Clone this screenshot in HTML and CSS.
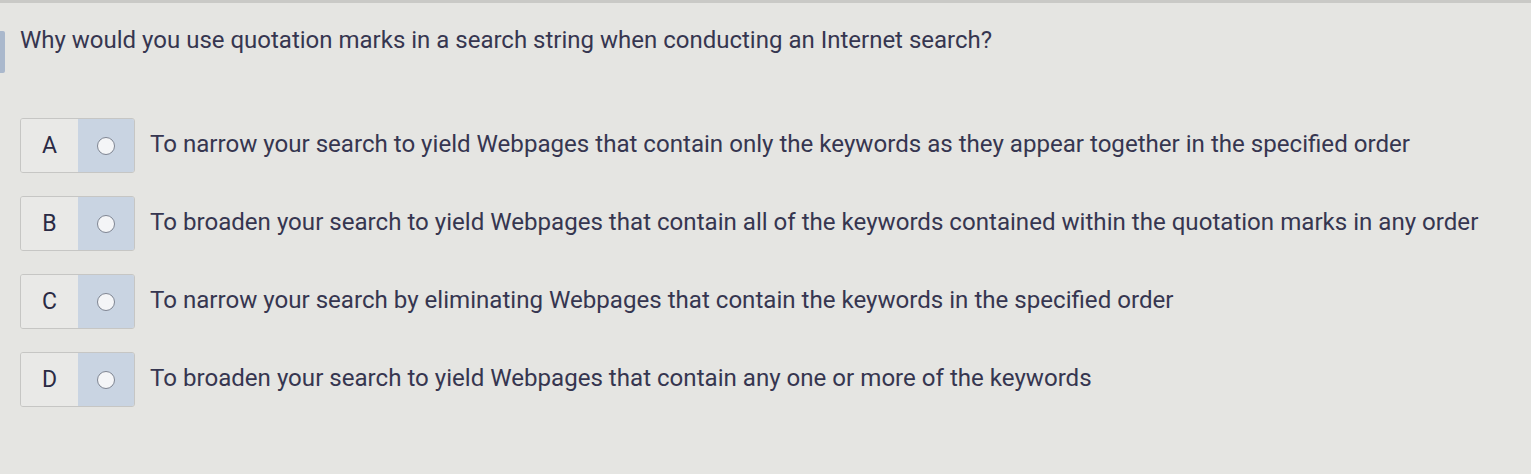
FILE: index.html
```html
<!DOCTYPE html>
<html>
<head>
<meta charset="utf-8">
<link rel="stylesheet" href="styles.css">
</head>
<body>
<div class="page">
  <div class="topline"></div>
  <div class="question">
    <div class="marker"></div>
    <p class="qtext">Why would you use quotation marks in a search string when conducting an Internet search?</p>
  </div>
  <div class="options">
    <div class="option">
      <div class="choice"><span class="letter">A</span><span class="radio-cell"><span class="radio"></span></span></div>
      <span class="otext">To narrow your search to yield Webpages that contain only the keywords as they appear together in the specified order</span>
    </div>
    <div class="option">
      <div class="choice"><span class="letter">B</span><span class="radio-cell"><span class="radio"></span></span></div>
      <span class="otext">To broaden your search to yield Webpages that contain all of the keywords contained within the quotation marks in any order</span>
    </div>
    <div class="option">
      <div class="choice"><span class="letter">C</span><span class="radio-cell"><span class="radio"></span></span></div>
      <span class="otext">To narrow your search by eliminating Webpages that contain the keywords in the specified order</span>
    </div>
    <div class="option">
      <div class="choice"><span class="letter">D</span><span class="radio-cell"><span class="radio"></span></span></div>
      <span class="otext">To broaden your search to yield Webpages that contain any one or more of the keywords</span>
    </div>
  </div>
</div>
</body>
</html>
```
FILE: styles.css
```css
html, body {
  margin: 0;
  padding: 0;
}
body {
  width: 1531px;
  height: 474px;
  overflow: hidden;
  background: #e5e5e2;
  font-family: Roboto, "Liberation Sans", Arial, sans-serif;
  color: #363650;
}
.page {
  display: flex;
  flex-direction: column;
}
.topline {
  height: 3px;
  background: #c9c9c6;
}
.question {
  display: flex;
  align-items: center;
  height: 72px;
}
.marker {
  width: 5px;
  height: 42px;
  background: #aab8cc;
  border-radius: 0 2px 2px 0;
  margin-right: 15px;
  align-self: flex-start;
  margin-top: 28px;
}
.qtext {
  margin: 0;
  font-size: 24px;
  margin-top: 2px;
}
.options {
  display: flex;
  flex-direction: column;
  gap: 23px;
  padding-left: 20px;
  margin-top: 43px;
}
.option {
  display: flex;
  align-items: center;
  gap: 15px;
}
.choice {
  display: flex;
  width: 115px;
  height: 55px;
  border: 1px solid #c6c6c4;
  border-radius: 3px;
  box-sizing: border-box;
  overflow: hidden;
  flex: none;
}
.letter {
  width: 57px;
  display: flex;
  align-items: center;
  justify-content: center;
  background: #e9e9e7;
  font-size: 23px;
  color: #2a2a44;
}
.radio-cell {
  flex: 1;
  display: flex;
  align-items: center;
  justify-content: center;
  background: #c9d4e2;
}
.radio {
  width: 18px;
  height: 18px;
  border-radius: 50%;
  background: #f4f5f7;
  border: 1.5px solid #7f8592;
  box-sizing: border-box;
}
.otext {
  font-size: 24.1px;
  margin-top: -4px;
}
```
